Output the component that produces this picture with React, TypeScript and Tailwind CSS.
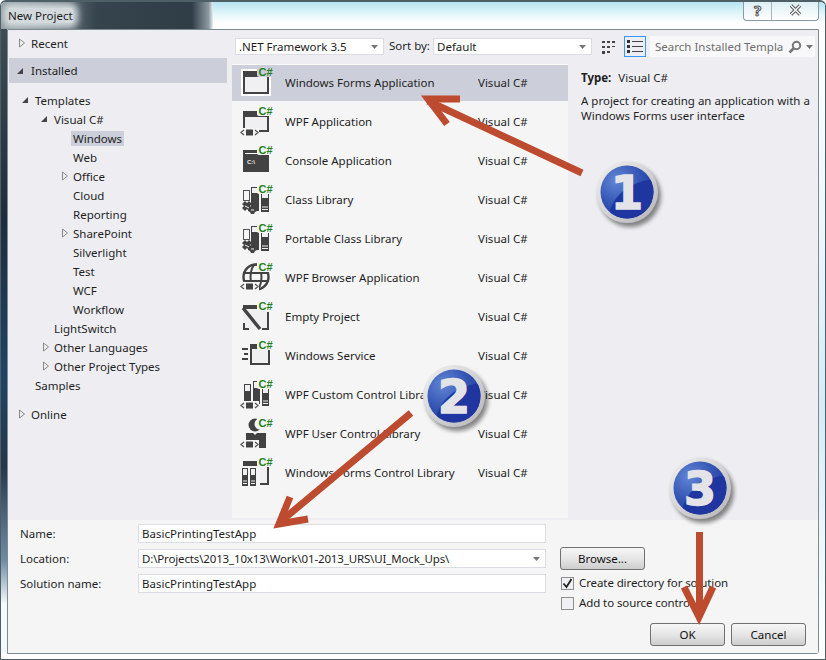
import type { ReactNode } from "react";

const dark = "#424242";
const paper = "#f0eff1";

function CSharp({ halo }: { halo: string }) {
	return (
		<>
			<rect x="21" y="2" width="15" height="11" rx="2" fill={halo} />
			<text x="22.5" y="11.5" fill="#1f7f1f" className="font-['Liberation_Sans',sans-serif] text-[11px] font-bold">
				C#
			</text>
		</>
	);
}

function Tag({ y = 27, halo }: { y?: number; halo: string }) {
	return (
		<>
			<rect x="4" y={y - 2} width="19" height="9" fill={halo} />
			<path d={`M8 ${y}l-3 2.5 3 2.5M19 ${y}l3 2.5-3 2.5`} fill="none" stroke="#555" strokeWidth="1.3" />
			<rect x="10" y={y - 0.5} width="7" height="6" fill={dark} />
		</>
	);
}

function Book({ x, y, w, h, lines }: { x: number; y: number; w: number; h: number; lines?: boolean }) {
	return (
		<>
			<rect x={x} y={y} width={w} height={h} fill={dark} />
			<rect x={x + 1} y={y + 1} width={w - 2} height={6} fill={paper} />
			{lines && <path d={`M${x + 1} ${y + h - 5}h${w - 2}M${x + 1} ${y + h - 2.5}h${w - 2}`} stroke={paper} />}
		</>
	);
}

function Glyph({ kind, halo }: { kind: string; halo: string }) {
	let body: ReactNode = null;
	if (kind === "forms") {
		body = (
			<>
				<rect x="5" y="5" width="30" height="27" fill="#fff" />
				<rect x="7" y="7" width="26" height="23" fill={dark} />
				<rect x="9" y="13" width="22" height="15" fill={paper} />
			</>
		);
	} else if (kind === "wpf") {
		body = (
			<>
				<rect x="7" y="8" width="26" height="21" fill={dark} />
				<rect x="9" y="14" width="22" height="13" fill={paper} />
				<Tag halo={halo} />
			</>
		);
	} else if (kind === "console") {
		body = (
			<>
				<rect x="7" y="8" width="26" height="22" fill={dark} />
				<path d="M9 11.5h21" stroke="#fff" />
				<text x="11" y="22" fill="#eee" className="font-['Liberation_Sans',sans-serif] text-[6px] font-bold">
					C:\
				</text>
			</>
		);
	} else if (kind === "library") {
		body = (
			<>
				<rect x="7.5" y="9.5" width="6" height="10" fill="none" stroke="#555" />
				<rect x="15" y="6" width="8" height="24" fill={dark} />
				<rect x="16" y="7" width="6" height="5" fill={paper} />
				<Book x={25} y={10} w={8} h={21} lines />
				<path d="M6 23l3-3 2 2 2-2 3 3-2 2 2 2-3 3-2-2-2 2-3-3 2-2z" fill={dark} />
				<path d="M15 25h3l1 2 2 1v2l-2 1-1 2h-3l-1-2-2-1v-2l2-1z" fill={dark} />
				<path d="M9 25l4 2M15 29h3" stroke="#eee" />
			</>
		);
	} else if (kind === "globe") {
		body = (
			<>
				<circle cx="20" cy="18" r="12.5" fill="none" stroke={dark} strokeWidth="2.4" />
				<ellipse cx="20" cy="18" rx="5.5" ry="12.5" fill="none" stroke={dark} strokeWidth="2" />
				<path d="M8 14h24M8 22h24" stroke={dark} strokeWidth="2" />
				<Tag y={25} halo={halo} />
			</>
		);
	} else if (kind === "empty") {
		body = (
			<>
				<rect x="7" y="7" width="26" height="25" fill={paper} />
				<path d="M7 7h18v4H7zM7 25v7h6v-2H9v-5zM31 14h2v18h-7v-2h5z" fill={dark} />
				<path d="M7 10l17 21" stroke={dark} strokeWidth="3.4" />
			</>
		);
	} else if (kind === "service") {
		body = (
			<>
				<path d="M6 12h6M8 17h4M6 22h6" stroke={dark} strokeWidth="2" />
				<rect x="14" y="7" width="20" height="21" fill={dark} />
				<rect x="16" y="12" width="16" height="14" fill={paper} />
			</>
		);
	} else if (kind === "custom") {
		body = (
			<>
				<Book x={8} y={8} w={7} h={17} />
				<rect x="17" y="5" width="7" height="23" fill={dark} />
				<rect x="18" y="6" width="5" height="6" fill={paper} />
				<Book x={26} y={10} w={7} h={20} lines />
				<Tag halo={halo} />
			</>
		);
	} else if (kind === "user") {
		body = (
			<>
				<circle cx="19" cy="10" r="6.5" fill={dark} />
				<circle cx="24" cy="9" r="5.5" fill={halo} />
				<path d="M10 18h7l2 2 2-2h9v15H10z" fill={dark} />
				<Tag y={27} halo={halo} />
			</>
		);
	} else if (kind === "control") {
		body = (
			<>
				<rect x="7" y="7" width="26" height="24" fill={dark} />
				<rect x="9" y="13" width="22" height="16" fill={paper} />
				<rect x="5" y="12" width="19" height="22" fill={halo} />
				<Book x={6} y={14} w={6} h={18} lines />
				<Book x={14} y={14} w={6} h={18} lines />
			</>
		);
	}
	return (
		<svg width="44" height="38" viewBox="0 0 44 38" className="shrink-0">
			{body}
			<CSharp halo={halo} />
		</svg>
	);
}

function Expander({ open, className }: { open?: boolean; className: string }) {
	return (
		<svg width="8" height="10" viewBox="0 0 8 10" className={className}>
			{open ? <path d="M7 2v6H1z" fill="#444" /> : <path d="M1.5 1l5 4-5 4z" fill="#eee" stroke="#8a8a8a" />}
		</svg>
	);
}

function Caret() {
	return (
		<svg width="7" height="4" viewBox="0 0 7 4" className="shrink-0">
			<path d="M0 0h7L3.5 4z" fill="#777" />
		</svg>
	);
}

const tree = [
	{ label: "Templates", indent: "pl-[27px]", arrow: "open", at: "left-[13px]" },
	{ label: "Visual C#", indent: "pl-[46px]", arrow: "open", at: "left-[32px]" },
	{ label: "Windows", indent: "pl-[65px]", selected: true },
	{ label: "Web", indent: "pl-[65px]" },
	{ label: "Office", indent: "pl-[65px]", arrow: "closed", at: "left-[53px]" },
	{ label: "Cloud", indent: "pl-[65px]" },
	{ label: "Reporting", indent: "pl-[65px]" },
	{ label: "SharePoint", indent: "pl-[65px]", arrow: "closed", at: "left-[53px]" },
	{ label: "Silverlight", indent: "pl-[65px]" },
	{ label: "Test", indent: "pl-[65px]" },
	{ label: "WCF", indent: "pl-[65px]" },
	{ label: "Workflow", indent: "pl-[65px]" },
	{ label: "LightSwitch", indent: "pl-[46px]" },
	{ label: "Other Languages", indent: "pl-[46px]", arrow: "closed", at: "left-[34px]" },
	{ label: "Other Project Types", indent: "pl-[46px]", arrow: "closed", at: "left-[34px]" },
	{ label: "Samples", indent: "pl-[27px]" },
];

const templates = [
	{ name: "Windows Forms Application", kind: "forms" },
	{ name: "WPF Application", kind: "wpf" },
	{ name: "Console Application", kind: "console" },
	{ name: "Class Library", kind: "library" },
	{ name: "Portable Class Library", kind: "library" },
	{ name: "WPF Browser Application", kind: "globe" },
	{ name: "Empty Project", kind: "empty" },
	{ name: "Windows Service", kind: "service" },
	{ name: "WPF Custom Control Library", kind: "custom" },
	{ name: "WPF User Control Library", kind: "user" },
	{ name: "Windows Forms Control Library", kind: "control" },
];

function TreePanel() {
	return (
		<div className="flex w-[224px] shrink-0 flex-col pt-[3px]">
			<div className="relative flex h-5 items-center pl-[23px]">
				<Expander className="absolute left-[10px] top-[5px]" />
				Recent
			</div>
			<div className="relative ml-px mt-[5px] flex h-[25px] w-[218px] items-center bg-[#ccced9] pl-[22px]">
				<Expander open className="absolute left-[7px] top-[8px]" />
				Installed
			</div>
			<div className="mt-[8px] flex flex-col">
				{tree.map((row) => (
					<div key={row.label} className={`relative flex h-[19px] items-center ${row.indent}`}>
						{row.arrow && <Expander open={row.arrow === "open"} className={`absolute top-[4px] ${row.at}`} />}
						<span className={row.selected ? "-mx-[2px] bg-[#ccced9] px-[2px]" : ""}>{row.label}</span>
					</div>
				))}
			</div>
			<div className="relative mt-[9px] flex h-5 items-center pl-[23px]">
				<Expander className="absolute left-[10px] top-[5px]" />
				Online
			</div>
		</div>
	);
}

function Toolbar() {
	return (
		<div className="flex h-[34px] shrink-0 items-start gap-[5px] pl-[3px] pt-[6px]">
			<div className="mt-[2px] flex h-[17px] w-[149px] items-center justify-between border border-[#dcdce6] bg-white pl-[3px] pr-[5px]">
				.NET Framework 3.5
				<Caret />
			</div>
			<div className="mt-[2px] w-[39px] whitespace-nowrap">Sort by:</div>
			<div className="mt-[2px] flex h-[17px] w-[159px] items-center justify-between border border-[#dcdce6] bg-white pl-[3px] pr-[5px]">
				Default
				<Caret />
			</div>
			<svg width="14" height="15" viewBox="0 0 14 15" className="ml-[5px] mt-[4px] shrink-0">
				<path
					d="M0 1h3v2H0zM5 1h3v2H5zM10 1h3v2h-3zM0 6h3v2H0zM5 6h3v2H5zM10 6h3v1h-3zM0 11h3v3H0zM5 11h3v2H5z"
					fill="#444"
				/>
			</svg>
			<div className="ml-[3px] flex h-[21px] w-[22px] items-center justify-center border border-[#3399ff]">
				<svg width="16" height="13" viewBox="0 0 16 13">
					<path d="M0 0h3v3H0zM0 5h3v3H0zM0 10h3v3H0z" fill="#333" />
					<path d="M5 1.5h11M5 6.5h11M5 11.5h11" stroke="#444" />
				</svg>
			</div>
			<div className="ml-[-1px] flex h-[21px] w-[165px] items-center bg-[#f8f8fa] pl-[5px] text-[#6d6d6d]">
				<span className="w-[130px] whitespace-nowrap">Search Installed Templa</span>
				<svg width="14" height="14" viewBox="0 0 14 14" className="ml-[3px] shrink-0">
					<circle cx="8.5" cy="5.5" r="3.7" fill="none" stroke="#777" strokeWidth="2" />
					<path d="M6 8l-4.5 4.5" stroke="#777" strokeWidth="2.6" />
				</svg>
				<span className="ml-[4px] flex">
					<Caret />
				</span>
			</div>
		</div>
	);
}

function TemplateList() {
	return (
		<div className="h-full w-[336px] shrink-0 border-t border-[#fafafa] bg-[#f5f5f5]">
			{templates.map((t, i) => (
				<div
					key={t.name}
					className={`mb-[3px] flex h-9 items-center pl-1 ${i === 0 ? "bg-[#ccced9]" : ""}`}
				>
					<Glyph kind={t.kind} halo={i === 0 ? "#ccced9" : "#f5f5f5"} />
					<span className="mb-[2px] ml-[5px] w-[193px] whitespace-nowrap">{t.name}</span>
					<span className="mb-[2px] whitespace-nowrap">Visual C#</span>
				</div>
			))}
		</div>
	);
}

function Field({ label, value, combo }: { label: string; value: string; combo?: boolean }) {
	return (
		<div className="flex h-[19px] items-center">
			<span className="w-[118px] shrink-0">{label}</span>
			<div className="flex h-[19px] w-[408px] items-center justify-between border border-[#dcdce6] bg-white pl-[3px] pr-[5px]">
				<span className={`whitespace-nowrap ${combo ? "tracking-[-0.15px]" : ""}`}>{value}</span>
				{combo && <Caret />}
			</div>
		</div>
	);
}

function Check({ label, checked }: { label: string; checked?: boolean }) {
	return (
		<div className="flex h-[13px] items-center gap-[5px] whitespace-nowrap">
			<div className="flex size-[13px] items-center justify-center border border-[#8e8f8f] bg-[#f0f0f2]">
				{checked && (
					<svg width="11" height="11" viewBox="0 0 11 11">
						<path d="M1.5 5.5l3 3.5 5-8" fill="none" stroke="#222" strokeWidth="1.8" />
					</svg>
				)}
			</div>
			<span className="mb-[2px] tracking-[-0.1px]">{label}</span>
		</div>
	);
}

function WinButton({ label, className }: { label: string; className: string }) {
	return (
		<button className={`flex h-[23px] items-center justify-center rounded-[3px] border border-[#707070] bg-[linear-gradient(#f6f6f6,#e6e6e6_50%,#cdcdcd)] text-[#111] ${className}`}>
			{label}
		</button>
	);
}

function Badge({ n, className }: { n: number; className: string }) {
	return (
		<svg width="72" height="72" viewBox="0 0 72 72" className={`absolute ${className}`}>
			<defs>
				<radialGradient id={`blue${n}`} cx="30%" cy="28%" r="80%">
					<stop offset="0" stopColor="#6286d6" />
					<stop offset="0.55" stopColor="#3556b4" />
					<stop offset="1" stopColor="#1f379e" />
				</radialGradient>
				<linearGradient id={`ring${n}`} x1="0" y1="0" x2="1" y2="1">
					<stop offset="0" stopColor="#f2f2f2" />
					<stop offset="1" stopColor="#b5b5b8" />
				</linearGradient>
				<filter id={`drop${n}`} x="-20%" y="-20%" width="140%" height="140%">
					<feGaussianBlur stdDeviation="2.2" />
				</filter>
				<clipPath id={`disc${n}`}>
					<circle cx="33" cy="33" r="26.5" />
				</clipPath>
			</defs>
			<circle cx="36" cy="37" r="31" fill="#000" opacity="0.45" filter={`url(#drop${n})`} />
			<circle cx="33" cy="33" r="31" fill={`url(#ring${n})`} />
			<circle cx="33" cy="33" r="26.5" fill={`url(#blue${n})`} />
			<g clipPath={`url(#disc${n})`}>
				<path d="M14 62C16 38 34 22 62 20V66H14z" fill="#1f35a0" />
			</g>
			<text
				x="33"
				y="50"
				textAnchor="middle"
				fill="#e4e4e8"
				stroke="#e4e4e8"
				strokeWidth="1.6"
				className="font-['DejaVu_Sans',sans-serif] text-[46px] font-bold"
			>
				{n}
			</text>
		</svg>
	);
}

function Arrows() {
	return (
		<svg width="826" height="660" viewBox="0 0 826 660" className="pointer-events-none absolute left-[-1px] top-[-2px]">
			<g fill="none" stroke="#bc4b2f" strokeWidth="7" strokeLinejoin="miter" strokeMiterlimit="10">
				<path d="M582 173L428 101" />
				<path d="M460 99H428l19 25" />
				<path d="M411 413L280 522" />
				<path d="M290 497l-11 27 29-5" />
				<path d="M699.5 532V612" />
				<path d="M684 587l15 30 14-30" />
			</g>
		</svg>
	);
}

export default function App() {
	return (
		<div className="relative flex h-[660px] w-[826px] flex-col overflow-hidden rounded-t-[6px] border-x border-b border-t-2 border-[#4f5f66] bg-white font-['Noto_Sans',sans-serif] text-[11.5px] leading-[15px] text-[#1e1e1e]">
			<div className="flex h-[27px] shrink-0 bg-[linear-gradient(#b5e4f0,#e4f7fb_45%,#fff_80%)]">
				<div className="flex w-[212px] shrink-0 items-center bg-[linear-gradient(90deg,#8d999f,#6d7a82_25%,#36444e_45%,#2f3d47_90%,#8f9ba2_98%,#e8f2f5)] pl-[7px]">
					<span className="rounded-[3px] bg-[#d3dadd] shadow-[0_0_7px_5px_#d3dadd]">New Project</span>
				</div>
			</div>

			<div className="flex min-h-0 flex-1">
				<div className="w-[6px] shrink-0 bg-[linear-gradient(#3e4c55,#1e2c3c_30%,#1d4468_55%,#25384b_70%,#6f8ca5_85%,#f4fafc_92%)]" />
				<div className="flex h-[625px] w-[812px] shrink-0 flex-col rounded-br-[3px] border border-[#7d8a8f] bg-[#eeeef2]">
					<div className="flex h-[490px] shrink-0">
						<TreePanel />
						<div className="flex min-w-0 flex-1 flex-col">
							<Toolbar />
							<div className="flex min-h-0 flex-1 items-start">
								<div className="h-[454px] overflow-hidden">
									<TemplateList />
								</div>
								<div className="pl-[13px] pt-[6px]">
									<div className="flex gap-[7px]">
										<span className="font-bold">Type:</span>
										<span>Visual C#</span>
									</div>
									<p className="mt-2 w-[235px]">A project for creating an application with a Windows Forms user interface</p>
								</div>
							</div>
						</div>
					</div>

					<div className="flex flex-1 bg-[#f5f5f5]">
						<div className="flex w-[552px] shrink-0 flex-col gap-[6px] pl-3 pt-1">
							<Field label="Name:" value="BasicPrintingTestApp" />
							<Field label="Location:" value="D:\Projects\2013_10x13\Work\01-2013_URS\UI_Mock_Ups\" combo />
							<Field label="Solution name:" value="BasicPrintingTestApp" />
						</div>
						<div className="flex flex-1 flex-col pt-[27px]">
							<WinButton label="Browse..." className="w-[85px]" />
							<div className="ml-px mt-[7px] flex flex-col gap-[7px]">
								<Check label="Create directory for solution" checked />
								<Check label="Add to source control" />
							</div>
							<div className="ml-[90px] mt-[13px] flex gap-[6px]">
								<WinButton label="OK" className="w-[75px]" />
								<WinButton label="Cancel" className="w-[75px]" />
							</div>
						</div>
					</div>
				</div>
				<div className="flex-1 bg-[linear-gradient(#fff,#e6f4fa_40%,#d5ecf6_60%,#fff)]" />
			</div>
			<div className="h-[5px] shrink-0 bg-white" />

			<div className="absolute right-[6px] top-[-2px] flex h-[21px] w-[76px] rounded-b-[4px] border border-t-0 border-[#8b9aa1] bg-[linear-gradient(#d9eef4,#fff)]">
				<div className="flex w-[28px] items-center justify-center border-r border-[#a9b6bc] pt-px text-[15px] font-bold text-[#f4f4f4] [-webkit-text-stroke:1px_#555]">
					?
				</div>
				<div className="flex flex-1 items-center justify-center">
					<svg width="13" height="12" viewBox="0 0 13 12">
						<path d="M2 1.5l9 9M11 1.5l-9 9" stroke="#555" strokeWidth="3.4" />
						<path d="M2 1.5l9 9M11 1.5l-9 9" stroke="#f4f4f4" strokeWidth="1.6" />
					</svg>
				</div>
			</div>

			<Arrows />
			<Badge n={1} className="left-[593px] top-[157px]" />
			<Badge n={2} className="left-[420px] top-[361px]" />
			<Badge n={3} className="left-[666px] top-[453px]" />
		</div>
	);
}
